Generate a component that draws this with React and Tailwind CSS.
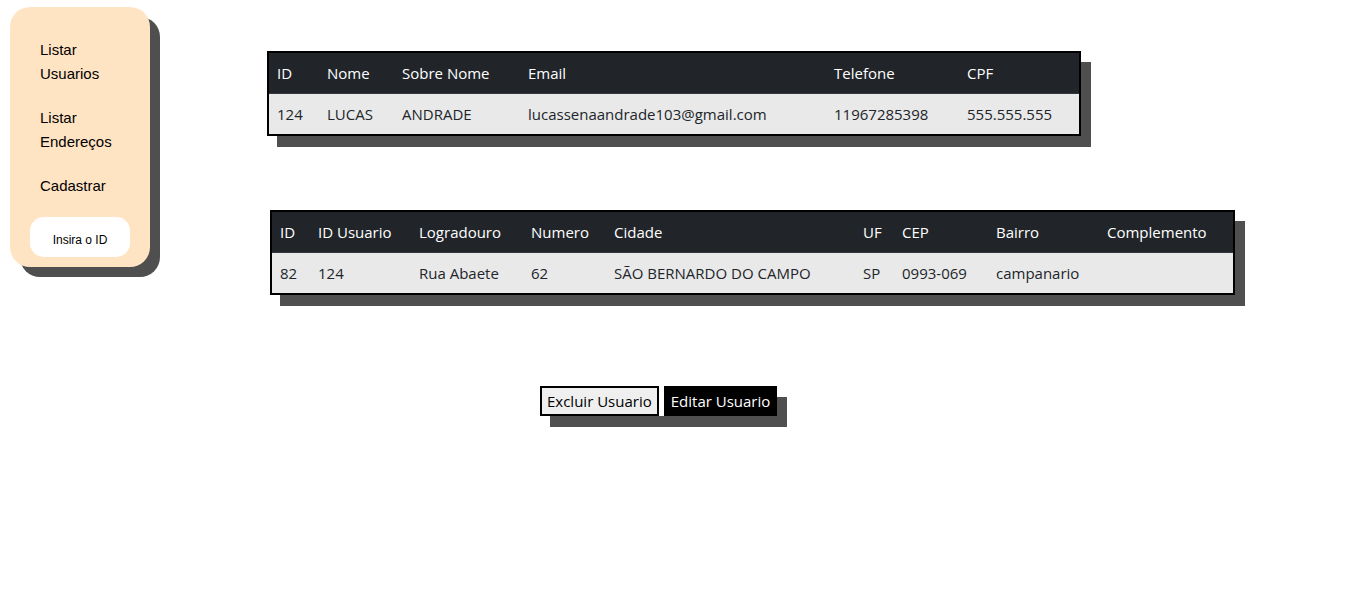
import React from 'react';

const usuarios = [
  { id: 124, nome: 'LUCAS', sobrenome: 'ANDRADE', email: 'lucassenaandrade103@gmail.com', telefone: '11967285398', cpf: '555.555.555' },
];

const enderecos = [
  { id: 82, idUsuario: 124, logradouro: 'Rua Abaete', numero: 62, cidade: 'SÃO BERNARDO DO CAMPO', uf: 'SP', cep: '0993-069', bairro: 'campanario', complemento: '' },
];

const DataTable = ({ columns, rows, className }) => (
  <div className={`border-2 border-black shadow-[10px_11px_0_#4f4f4f] ${className}`}>
    <table className="table-fixed border-collapse text-[15px] leading-6 font-['Open_Sans',sans-serif]">
      <thead>
        <tr className="bg-[#212529] text-white">
          {columns.map((col) => (
            <th key={col.key} className={`${col.w} px-2 py-2 text-left font-normal`}>
              {col.label}
            </th>
          ))}
        </tr>
      </thead>
      <tbody>
        {rows.map((row, i) => (
          <tr key={i} className="bg-[#e9e9e9] text-[#212529] border-t border-[#32383e]">
            {columns.map((col) => (
              <td key={col.key} className="px-2 py-2 whitespace-nowrap">
                {row[col.key]}
              </td>
            ))}
          </tr>
        ))}
      </tbody>
    </table>
  </div>
);

const App = () => {
  const colsUsuario = [
    { key: 'id', label: 'ID', w: 'w-[50px]' },
    { key: 'nome', label: 'Nome', w: 'w-[75px]' },
    { key: 'sobrenome', label: 'Sobre Nome', w: 'w-[126px]' },
    { key: 'email', label: 'Email', w: 'w-[306px]' },
    { key: 'telefone', label: 'Telefone', w: 'w-[133px]' },
    { key: 'cpf', label: 'CPF', w: 'w-[120px]' },
  ];

  const colsEndereco = [
    { key: 'id', label: 'ID', w: 'w-[38px]' },
    { key: 'idUsuario', label: 'ID Usuario', w: 'w-[101px]' },
    { key: 'logradouro', label: 'Logradouro', w: 'w-[112px]' },
    { key: 'numero', label: 'Numero', w: 'w-[83px]' },
    { key: 'cidade', label: 'Cidade', w: 'w-[249px]' },
    { key: 'uf', label: 'UF', w: 'w-[39px]' },
    { key: 'cep', label: 'CEP', w: 'w-[94px]' },
    { key: 'bairro', label: 'Bairro', w: 'w-[111px]' },
    { key: 'complemento', label: 'Complemento', w: 'w-[134px]' },
  ];

  return (
    <div className="flex min-h-screen bg-white">
      {/* Sidebar */}
      <aside className="ml-[10px] mt-[7px] w-[140px] h-[260px] shrink-0 rounded-[20px] bg-[#ffe4c4] shadow-[10px_10px_0_#4f4f4f] pt-[31px] font-['Liberation_Sans',Arial,sans-serif] text-[15px] leading-6 text-black">
        <nav className="flex flex-col gap-5 px-[30px]">
          <a className="cursor-pointer">Listar Usuarios</a>
          <a className="cursor-pointer">Listar Endereços</a>
          <a className="cursor-pointer">Cadastrar</a>
        </nav>
        <input
          placeholder="Insira o ID"
          className="mt-[19px] ml-[20px] w-[100px] h-[40px] rounded-[14px] bg-white pt-[6px] text-center text-[12px] outline-none placeholder:text-black"
        />
      </aside>

      {/* Main */}
      <main className="flex flex-col items-start">
        <DataTable columns={colsUsuario} rows={usuarios} className="ml-[117px] mt-[51px]" />
        <DataTable columns={colsEndereco} rows={enderecos} className="ml-[120px] mt-[74px]" />

        <div className="ml-[390px] mt-[91px] flex gap-[5px] shadow-[10px_11px_0_#4f4f4f] font-['Open_Sans',sans-serif] text-[15px]">
          <button className="h-[30px] border-2 border-black bg-[#efefef] px-[5px] text-black">
            Excluir Usuario
          </button>
          <button className="h-[30px] bg-black px-[7px] text-white">Editar Usuario</button>
        </div>
      </main>
    </div>
  );
};

export default App;
